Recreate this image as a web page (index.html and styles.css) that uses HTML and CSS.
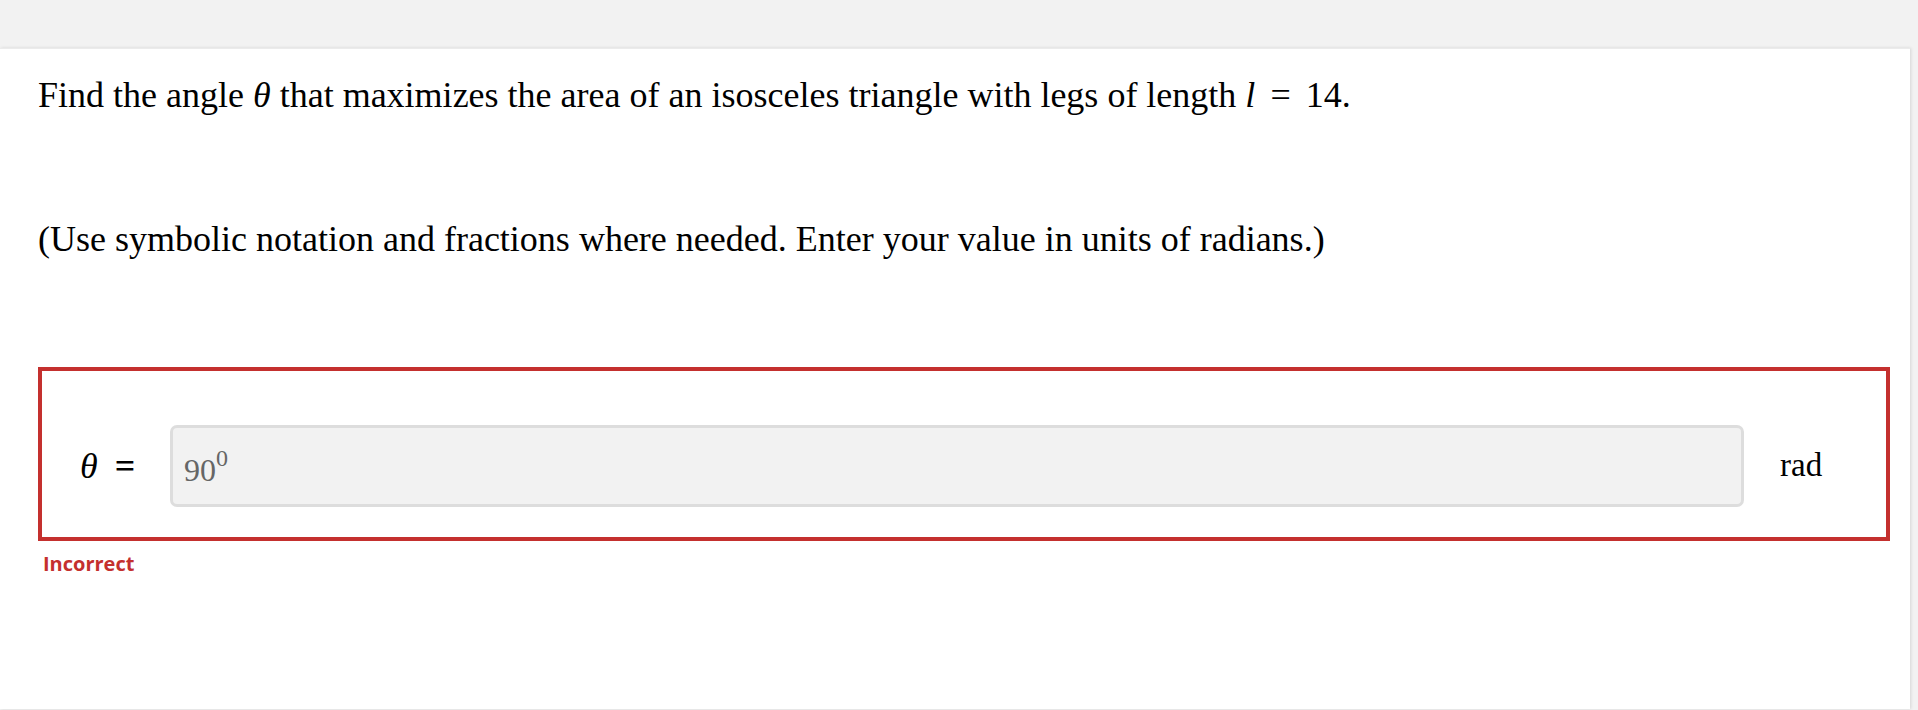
FILE: index.html
```html
<!DOCTYPE html>
<html>
<head>
	<meta charset="UTF-8">
	<title>Question</title>
	<link rel="stylesheet" href="styles.css">
</head>
<body>
	<div class="card">
		<p class="q first">Find the angle <i class="mv">&theta;</i> that maximizes the area of an isosceles triangle with legs of length <i class="mv">l</i> <span class="op">=</span> 14.</p>
		<p class="q second">(Use symbolic notation and fractions where needed. Enter your value in units of radians.)</p>
		<div class="ansbox wrong">
			<span class="lbl"><i class="mv">&theta;</i> <span class="op">=</span></span>
			<div class="ansfield"><span class="val">90<sup>0</sup></span></div>
			<span class="unit">rad</span>
		</div>
		<div class="fb">Incorrect</div>
	</div>
</body>
</html>
```

FILE: styles.css
```css
html, body { margin: 0; padding: 0; }
body { background: #F2F2F2; color: #000; font-family: "Liberation Serif", "Times New Roman", serif; padding-top: 49px; height: 710px; box-sizing: border-box; overflow: hidden; }
.card { background: #FFF; width: 1910px; height: 661px; box-sizing: border-box; padding: 24px 0 0 38px;
	box-shadow: 1px 0 3px rgba(0,0,0,0.12); border-top: 1px solid #EBEBEB; margin-top: -1px; }
.q { margin: 0; font-size: 36px; line-height: 44px; }
.q.second { margin-top: 100px; }
.mv { font-style: italic; }
.op { padding: 0 6px; }
.ansbox { margin-top: 106px; width: 1852px; box-sizing: border-box; border: 4px solid #C4302E;
	display: flex; align-items: center; padding: 54px 0 30px 0; }
.lbl { width: 128px; box-sizing: border-box; padding-left: 38px; font-size: 36px; white-space: nowrap; }
.lbl .op { padding: 0 0 0 8px; font-weight: bold; }
.ansfield { width: 1574px; height: 82px; box-sizing: border-box; border: 3px solid #DDDDDD; border-radius: 7px;
	background: #F2F2F2; display: flex; align-items: center; padding: 8px 0 0 11px; }
.val { color: #666; font-size: 32px; }
.val sup { font-size: 24px; vertical-align: 0; position: relative; top: -15px; }
.unit { margin-left: 36px; font-size: 33px; margin-top: -2px; }
.fb { color: #C4302E; font-family: "Open Sans", sans-serif; font-weight: bold; font-size: 20px; margin: 9px 0 0 5px; }
```
